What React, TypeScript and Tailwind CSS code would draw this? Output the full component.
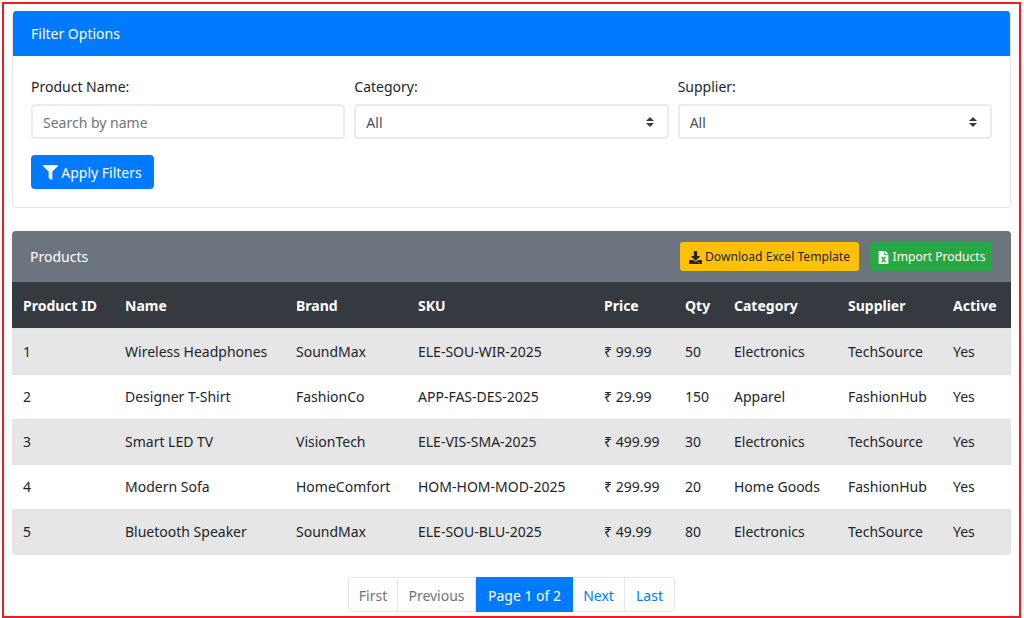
import { FaDownload, FaFileExcel, FaFilter } from 'react-icons/fa';

const products = [
  ['1', 'Wireless Headphones', 'SoundMax', 'ELE-SOU-WIR-2025', '₹ 99.99', '50', 'Electronics', 'TechSource', 'Yes'],
  ['2', 'Designer T-Shirt', 'FashionCo', 'APP-FAS-DES-2025', '₹ 29.99', '150', 'Apparel', 'FashionHub', 'Yes'],
  ['3', 'Smart LED TV', 'VisionTech', 'ELE-VIS-SMA-2025', '₹ 499.99', '30', 'Electronics', 'TechSource', 'Yes'],
  ['4', 'Modern Sofa', 'HomeComfort', 'HOM-HOM-MOD-2025', '₹ 299.99', '20', 'Home Goods', 'FashionHub', 'Yes'],
  ['5', 'Bluetooth Speaker', 'SoundMax', 'ELE-SOU-BLU-2025', '₹ 49.99', '80', 'Electronics', 'TechSource', 'Yes'],
];

const headers = ['Product ID', 'Name', 'Brand', 'SKU', 'Price', 'Qty', 'Category', 'Supplier', 'Active'];
const colWidths = ['w-[102px]', 'w-[171px]', 'w-[122px]', 'w-[186px]', 'w-[81px]', 'w-[49px]', 'w-[114px]', 'w-[105px]', 'w-[69px]'];

function SelectField({ label }: { label: string }) {
  return (
    <div className="flex-1">
      <label className="block h-[30px] pt-[2px] text-[14px] leading-[22px] text-[#212529]">{label}</label>
      <div className="flex h-[35px] items-center justify-between rounded border-2 border-[#e9ecef] bg-white pl-[10px] pr-[13px] text-[14px] text-[#495057]">
        <span className="pt-px">All</span>
        {/* 위아래 화살표 */}
        <svg width="8" height="10" viewBox="0 0 8 10" fill="#343a40">
          <path d="M4 0 L8 4 H0 Z M4 10 L0 6 H8 Z" />
        </svg>
      </div>
    </div>
  );
}

export default function App() {
  return (
    <div className="h-[618px] w-[1024px] overflow-hidden bg-white pl-[2px] pt-[2px] font-['Noto_Sans','Open_Sans',sans-serif]">
      <div className="h-[616px] w-[1019px] border-2 border-[#ee1c25] pl-[8px] pt-[7px]">
        {/* 필터 */}
        <section className="w-[999px] overflow-hidden rounded border border-t-0 border-[#e4e7ea] pt-0">
          <div className="-mx-px flex h-[45px] items-center bg-[#007bff] px-[19px] text-[14px] text-white">Filter Options</div>
          <div className="p-[18px]">
            <div className="flex gap-[9px]">
              <div className="flex-1">
                <label className="block h-[30px] pt-[2px] text-[14px] leading-[22px] text-[#212529]">Product Name:</label>
                <div className="flex h-[35px] items-center rounded border-2 border-[#e9ecef] bg-white px-[10px] pt-px text-[14px] text-[#6c757d]">
                  Search by name
                </div>
              </div>
              <SelectField label="Category:" />
              <SelectField label="Supplier:" />
            </div>
            <button className="mt-[16px] flex h-[34px] w-[123px] items-center justify-center gap-[3px] rounded bg-[#007bff] text-[14px] text-white">
              <FaFilter className="text-[15px]" />
              Apply Filters
            </button>
          </div>
        </section>

        {/* 상품 목록 */}
        <section className="mt-[23px] w-[999px] overflow-hidden rounded-[4px] border-b border-[#dee2e6]">
          <div className="flex h-[51px] items-center justify-between bg-[#6c757d] pl-[18px] pr-[19px]">
            <span className="text-[14px] text-white">Products</span>
            <div className="flex gap-[11px]">
              <button className="flex h-[29px] w-[179px] items-center justify-center gap-[3px] rounded-[3px] bg-[#ffc107] pt-px text-[12.1px] text-[#212529]">
                <FaDownload className="text-[13px]" />
                Download Excel Template
              </button>
              <button className="flex h-[29px] w-[122px] items-center justify-center gap-[3px] rounded-[3px] bg-[#28a745] pt-px text-[12.1px] text-white">
                <FaFileExcel className="text-[13px]" />
                Import Products
              </button>
            </div>
          </div>
          <table className="w-full table-fixed border-collapse text-[14px] text-[#212529]">
            <colgroup>
              {colWidths.map((w) => (
                <col key={w} className={w} />
              ))}
            </colgroup>
            <thead>
              <tr className="h-[46px] bg-[#343a40] text-white">
                {headers.map((h) => (
                  <th key={h} className="whitespace-nowrap px-[11px] pt-[2px] text-left font-bold">
                    {h}
                  </th>
                ))}
              </tr>
            </thead>
            <tbody>
              {products.map((row, i) => (
                <tr key={row[0]} className={`border-t border-[#dee2e6] ${i % 2 === 0 ? 'bg-[#e6e6e6]' : 'bg-white'} ${i === 0 ? 'h-[46px]' : 'h-[45px]'}`}>
                  {row.map((cell, j) => (
                    <td key={j} className="whitespace-nowrap px-[11px]">
                      {cell}
                    </td>
                  ))}
                </tr>
              ))}
            </tbody>
          </table>
        </section>

        {/* 페이지네이션 */}
        <nav className="mt-[22px] flex h-[35px] w-[999px] justify-center text-[14px]">
          <span className="flex w-[50px] items-center justify-center rounded-l border border-[#e4e7ea] pt-px text-[#6c757d]">First</span>
          <span className="flex w-[78px] items-center justify-center border-y border-r border-[#e4e7ea] pt-px text-[#6c757d]">Previous</span>
          <span className="flex w-[97px] items-center justify-center bg-[#007bff] pt-px text-white">Page 1 of 2</span>
          <span className="flex w-[52px] items-center justify-center border-y border-r border-[#e4e7ea] pt-px text-[#007bff]">Next</span>
          <span className="flex w-[50px] items-center justify-center rounded-r border-y border-r border-[#e4e7ea] pt-px text-[#007bff]">Last</span>
        </nav>
      </div>
    </div>
  );
}
